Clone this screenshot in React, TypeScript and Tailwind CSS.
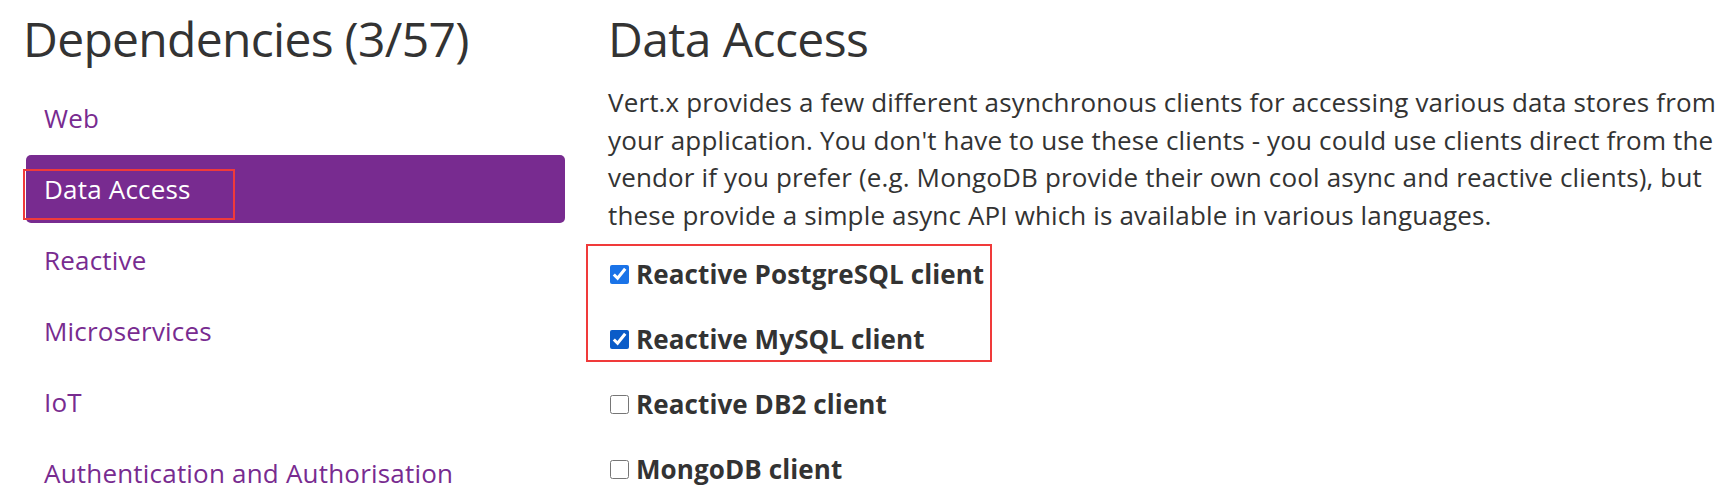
/**
 * App.tsx — dependency picker: category sidebar + selected category checklist.
 */
import { useState } from 'react'

const categories = ['Web', 'Data Access', 'Reactive', 'Microservices', 'IoT', 'Authentication and Authorisation']

const deps = [
  { name: 'Reactive PostgreSQL client', checked: true },
  { name: 'Reactive MySQL client', checked: true },
  { name: 'Reactive DB2 client', checked: false },
  { name: 'MongoDB client', checked: false },
]

export default function App() {
  const [active, setActive] = useState('Data Access')
  const [items, setItems] = useState(deps)

  const toggle = (i: number) =>
    setItems(list => list.map((d, j) => (j === i ? { ...d, checked: !d.checked } : d)))

  return (
    <div className="h-[494px] overflow-hidden bg-white text-[#333] font-['Open_Sans',sans-serif] flex">
      {/* sidebar */}
      <div className="w-[539px] ml-[26px] shrink-0">
        <h2 className="text-[48px] font-medium leading-none mt-[15px] ml-[-3px] tracking-[-0.7px]">Dependencies (3/57)</h2>
        <ul className="mt-[21px]">
          {categories.map(c => {
            const on = c === active
            return (
              <li key={c} className="mb-[3px]">
                <button
                  onClick={() => setActive(c)}
                  className={
                    'relative w-full h-[68px] text-left pl-[18px] text-[26px] tracking-[0.2px] rounded-[5px] ' +
                    (on ? 'bg-[#782b90] text-white' : 'text-[#782b90]')
                  }
                >
                  {on && <span className="absolute left-[-3px] top-[14px] w-[212px] h-[51px] border-2 border-[#f03a3a]" />}
                  {c}
                </button>
              </li>
            )
          })}
        </ul>
      </div>

      {/* content */}
      <div className="ml-[43px] flex-1">
        <h2 className="text-[48px] font-medium leading-none mt-[15px] tracking-[-0.6px]">Data Access</h2>
        <p className="mt-[21px] text-[26px] leading-[37.6px] tracking-[0.15px] whitespace-nowrap">
          Vert.x provides a few different asynchronous clients for accessing various data stores from<br />
          your application. You don't have to use these clients - you could use clients direct from the<br />
          vendor if you prefer (e.g. MongoDB provide their own cool async and reactive clients), but<br />
          these provide a simple async API which is available in various languages.
        </p>
        <div className="relative mt-[8px]">
          <span className="absolute left-[-22px] top-[2px] w-[406px] h-[118px] border-2 border-[#f03a3a] pointer-events-none" />
          {items.map((d, i) => (
            <label key={d.name} className="flex items-center h-[65px] gap-[7px] cursor-pointer">
              <input
                type="checkbox"
                checked={d.checked}
                onChange={() => toggle(i)}
                className={'w-[19px] h-[19px] m-0 ml-[2px] ' + (i === 1 ? 'accent-[#0b5cc8]' : 'accent-[#1a73e8]')}
              />
              <span className="text-[26px] font-bold tracking-[0.1px]">{d.name}</span>
            </label>
          ))}
        </div>
      </div>
    </div>
  )
}
